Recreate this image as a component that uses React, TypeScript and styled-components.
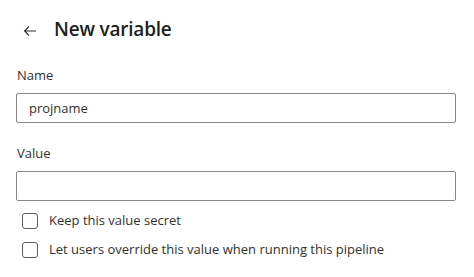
import React, { FC } from 'react';
import styled, { createGlobalStyle } from 'styled-components';

const GlobalStyle = createGlobalStyle`
  body {
    margin: 0;
    background: #ffffff;
    font-family: "Open Sans", "Noto Sans", "Liberation Sans", sans-serif;
    color: #323130;
  }
`;

const Panel = styled.div`
  width: 474px;
  height: 277px;
  box-sizing: border-box;
  padding: 14px 18px 0 16px;
  display: flex;
  flex-direction: column;
`;

const Header = styled.div`
  display: flex;
  align-items: center;
  height: 30px;
  gap: 17px;
  padding-left: 6px;
`;

const BackButton = styled.button`
  border: none;
  background: none;
  padding: 0;
  width: 15px;
  height: 15px;
  display: flex;
  align-items: center;
  justify-content: center;
  color: #323130;
  cursor: pointer;
  margin-top: 3px;
`;

const Title = styled.h1`
  margin: 0;
  font-size: 19px;
  font-weight: 600;
  letter-spacing: -0.2px;
  color: #201f1e;
`;

const Field = styled.div<{ $top: number }>`
  display: flex;
  flex-direction: column;
  margin-top: ${(p) => p.$top}px;
`;

const Label = styled.label`
  font-size: 13px;
  line-height: 18px;
  color: #323130;
  padding-left: 1px;
  margin-bottom: 9px;
`;

const TextInput = styled.input`
  box-sizing: border-box;
  width: 440px;
  height: 30px;
  border: 1px solid #8a8886;
  border-radius: 2px;
  padding: 0 12px;
  font-family: inherit;
  font-size: 13px;
  color: #323130;
  outline: none;
`;

const Checks = styled.div`
  display: flex;
  flex-direction: column;
  gap: 10px;
  margin-top: 10px;
  padding-left: 6px;
`;

const CheckRow = styled.label`
  display: flex;
  align-items: center;
  gap: 11px;
  font-size: 13px;
  line-height: 19px;
  color: #323130;
`;

const Box = styled.span`
  box-sizing: border-box;
  width: 16px;
  height: 16px;
  border: 1px solid #605e5c;
  border-radius: 3px;
  flex-shrink: 0;
`;

export const App: FC = () => {
  return (
    <>
      <GlobalStyle />
      <Panel>
        <Header>
          <BackButton aria-label="Back">
            <svg width="14" height="12" viewBox="0 0 14 12" fill="none">
              <path d="M13 6H1.5M6 1.5L1.5 6L6 10.5" stroke="#323130" strokeWidth="1.1" />
            </svg>
          </BackButton>
          <Title>New variable</Title>
        </Header>
        <Field $top={22}>
          <Label>Name</Label>
          <TextInput defaultValue="projname" />
        </Field>
        <Field $top={21}>
          <Label>Value</Label>
          <TextInput defaultValue="" />
        </Field>
        <Checks>
          <CheckRow>
            <Box />
            Keep this value secret
          </CheckRow>
          <CheckRow>
            <Box />
            Let users override this value when running this pipeline
          </CheckRow>
        </Checks>
      </Panel>
    </>
  );
};

export default App;
